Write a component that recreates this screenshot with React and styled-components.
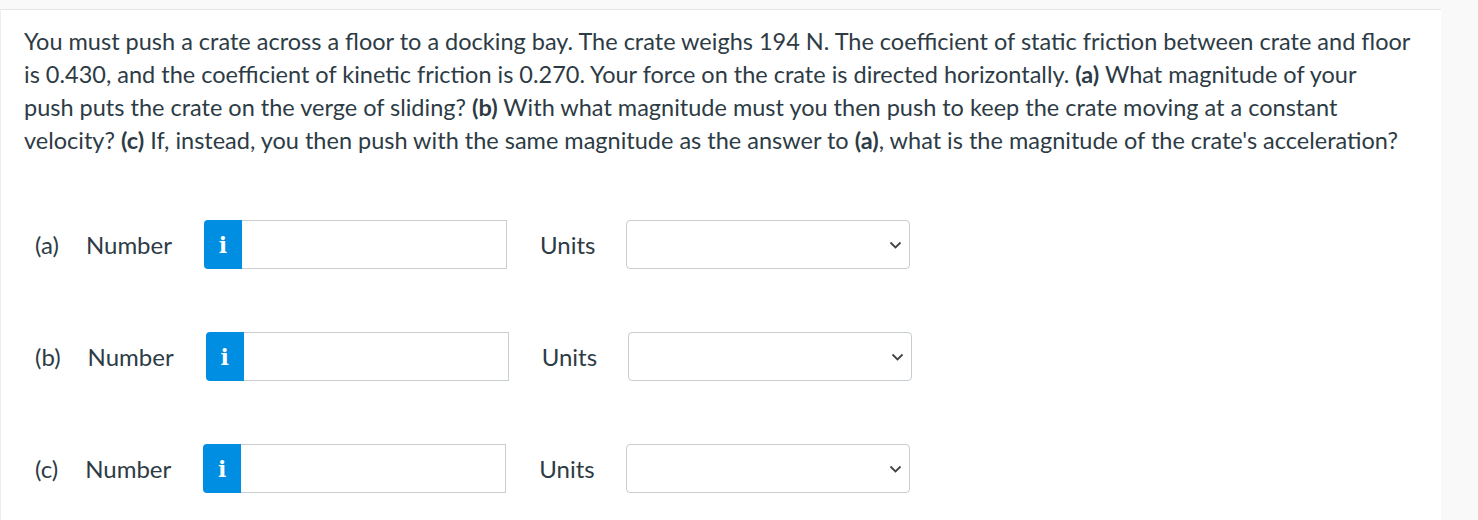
import React from "react";
import styled, { createGlobalStyle } from "styled-components";

const GlobalStyle = createGlobalStyle`
  body {
    margin: 0;
    background: #f9f9f9;
    font-family: Lato, "Open Sans", sans-serif;
    color: #2d3b45;
  }
`;

const Page = styled.div`
  display: flex;
  height: 520px;
  overflow: hidden;
`;

const Panel = styled.div`
  width: 1441px;
  flex: none;
  margin-top: 9px;
  background: #fff;
  border-top: 1px solid #e6e6e6;
  border-left: 1px solid #eeeeee;
  box-sizing: border-box;
  padding: 15px 0 0 23px;
`;

const Question = styled.p`
  margin: 0;
  font-size: 23.5px;
  line-height: 33px;
`;

const Answers = styled.div`
  display: flex;
  flex-direction: column;
  gap: 63px;
  margin-top: 63px;
  padding-left: 11px;
`;

const Row = styled.div`
  display: flex;
  align-items: center;
  height: 49px;
  font-size: 24px;
`;

const Part = styled.span`
  margin-right: 27px;
`;

const Label = styled.span`
  margin-right: 32px;
`;

const InfoButton = styled.button`
  width: 38px;
  height: 49px;
  border: none;
  border-radius: 4px 0 0 4px;
  background: #008ee2;
  color: #fff;
  font-family: "DejaVu Serif", serif;
  font-weight: bold;
  font-size: 22px;
  padding: 0;
`;

const NumberInput = styled.input`
  width: 265px;
  height: 49px;
  box-sizing: border-box;
  border: 1px solid #c7cdd1;
  border-left: none;
  margin: 0 33px 0 0;
  background: #fff;
`;

const Select = styled.div`
  position: relative;
  width: 284px;
  height: 49px;
  box-sizing: border-box;
  border: 1px solid #c7cdd1;
  border-radius: 4px;
  background: #fff;
  margin-left: 31px;
  svg {
    position: absolute;
    right: 7px;
    top: 20px;
  }
`;

const rows = ["a", "b", "c"];

export default function App() {
  return (
    <Page>
      <GlobalStyle />
      <Panel>
        <Question>
          You must push a crate across a floor to a docking bay. The crate
          weighs 194 N. The coefficient of static friction between crate and
          floor
          <br />
          is 0.430, and the coefficient of kinetic friction is 0.270. Your
          force on the crate is directed horizontally. <b>(a)</b> What magnitude
          of your
          <br />
          push puts the crate on the verge of sliding? <b>(b)</b> With what
          magnitude must you then push to keep the crate moving at a constant
          <br />
          velocity? <b>(c)</b> If, instead, you then push with the same
          magnitude as the answer to <b>(a)</b>, what is the magnitude of the
          crate's acceleration?
        </Question>
        <Answers>
          {rows.map((r) => (
            <Row key={r}>
              <Part>({r})</Part>
              <Label>Number</Label>
              <InfoButton>i</InfoButton>
              <NumberInput type="text" />
              <span>Units</span>
              <Select>
                <svg width="13" height="8" viewBox="0 0 13 8">
                  <path d="M1.5 1.5 L6.5 6.5 L11.5 1.5" fill="none" stroke="#444" strokeWidth="1.8" />
                </svg>
              </Select>
            </Row>
          ))}
        </Answers>
      </Panel>
    </Page>
  );
}
